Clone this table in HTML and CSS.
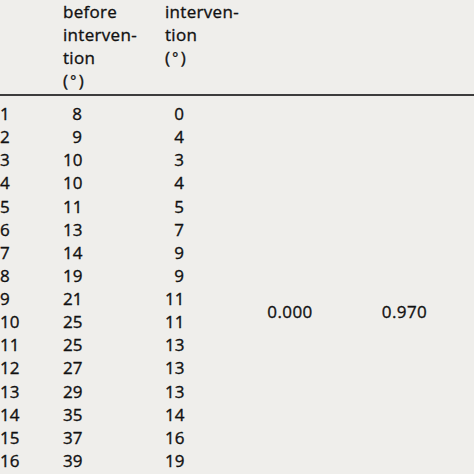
FILE: index.html
```html
<!DOCTYPE html>
<html>
<head>
<meta charset="utf-8">
<link rel="stylesheet" href="styles.css">
</head>
<body>
<table class="data">
  <colgroup>
    <col class="c1"><col class="c2"><col class="c3"><col class="c4"><col class="c5">
  </colgroup>
  <thead>
    <tr>
      <th></th>
      <th>before<br>interven-<br>tion<br>(<span class="deg">°</span>)</th>
      <th>interven-<br>tion<br>(<span class="deg">°</span>)</th>
      <th></th>
      <th></th>
    </tr>
  </thead>
  <tbody>
    <tr class="first"><td>1</td><td><span class="n">8</span></td><td><span class="n">0</span></td><td class="stat" rowspan="16">0.000</td><td class="stat" rowspan="16">0.970</td></tr>
    <tr><td>2</td><td><span class="n">9</span></td><td><span class="n">4</span></td></tr>
    <tr><td>3</td><td><span class="n">10</span></td><td><span class="n">3</span></td></tr>
    <tr><td>4</td><td><span class="n">10</span></td><td><span class="n">4</span></td></tr>
    <tr><td>5</td><td><span class="n">11</span></td><td><span class="n">5</span></td></tr>
    <tr><td>6</td><td><span class="n">13</span></td><td><span class="n">7</span></td></tr>
    <tr><td>7</td><td><span class="n">14</span></td><td><span class="n">9</span></td></tr>
    <tr><td>8</td><td><span class="n">19</span></td><td><span class="n">9</span></td></tr>
    <tr><td>9</td><td><span class="n">21</span></td><td><span class="n">11</span></td></tr>
    <tr><td>10</td><td><span class="n">25</span></td><td><span class="n">11</span></td></tr>
    <tr><td>11</td><td><span class="n">25</span></td><td><span class="n">13</span></td></tr>
    <tr><td>12</td><td><span class="n">27</span></td><td><span class="n">13</span></td></tr>
    <tr><td>13</td><td><span class="n">29</span></td><td><span class="n">13</span></td></tr>
    <tr><td>14</td><td><span class="n">35</span></td><td><span class="n">14</span></td></tr>
    <tr><td>15</td><td><span class="n">37</span></td><td><span class="n">16</span></td></tr>
    <tr><td>16</td><td><span class="n">39</span></td><td><span class="n">19</span></td></tr>
  </tbody>
</table>
</body>
</html>
```

FILE: styles.css
```css
html, body {
  margin: 0;
  padding: 0;
  background: #efeeeb;
}
body {
  width: 474px;
  height: 474px;
  overflow: hidden;
  font-family: "Open Sans", "DejaVu Sans", sans-serif;
  font-size: 17px;
  color: #111;
  -webkit-text-stroke: 0.35px #111;
}
.data {
  width: 474px;
  border-collapse: collapse;
  table-layout: fixed;
}
.c1 { width: 63px; }
.c2 { width: 102px; }
.c3 { width: 80px; }
.c4 { width: 90px; }
.c5 { width: 139px; }
.data th {
  font-weight: normal;
  text-align: left;
  vertical-align: top;
  line-height: 23px;
  padding: 0 0 2px 0;
  border-bottom: 2px solid #3c3c3c;
  letter-spacing: 0.3px;
}
.deg {
  display: inline-block;
  padding: 0 2px 0 2px;
  font-size: 14px;
  vertical-align: 1px;
}
.data td {
  padding: 0;
  line-height: 23.13px;
  height: 23.13px;
  vertical-align: middle;
  white-space: nowrap;
}
.data tr.first td {
  padding-top: 6px;
}
.n {
  display: inline-block;
  width: 19px;
  text-align: right;
}
.data tr.first td.stat {
  text-align: center;
  vertical-align: middle;
  padding-top: 56px;
  letter-spacing: 0.4px;
}
```
